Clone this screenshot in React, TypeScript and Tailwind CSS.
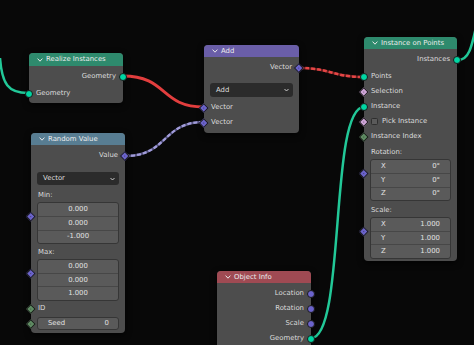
import React from "react";

type Kind = "circle" | "diamond";

function Socket({ side, kind, color, top }: { side: "left" | "right"; kind: Kind; color: string; top?: string }) {
  const pos = side === "left" ? "left-0 -translate-x-1/2" : "right-0 translate-x-1/2";
  const vert = top ? top : "top-1/2 -translate-y-1/2";
  if (kind === "circle") {
    return (
      <span
        className={`absolute ${vert} ${pos} w-[8px] h-[8px] rounded-full border border-[#1a1a1a] ${color}`}
      />
    );
  }
  return (
    <span className={`absolute ${vert} ${pos} w-[9px] h-[9px] flex items-center justify-center`}>
      <span className={`w-[6.5px] h-[6.5px] rotate-45 border border-[#1a1a1a] ${color} flex items-center justify-center`}>
        <span className="w-[1.5px] h-[1.5px] bg-[#222]/60" />
      </span>
    </span>
  );
}

function Chevron() {
  return (
    <svg width="6" height="4" viewBox="0 0 6 4" className="shrink-0">
      <polyline points="0.6,0.6 3,3.2 5.4,0.6" fill="none" stroke="#e8e8e8" strokeWidth="1" />
    </svg>
  );
}

function Node({
  pos,
  w,
  header,
  headerH,
  title,
  children,
}: {
  pos: string;
  w: string;
  header: string;
  headerH: string;
  title: string;
  children: React.ReactNode;
}) {
  return (
    <div className={`absolute ${pos} ${w} rounded-[4px] bg-[#4d4d4d] text-[#dcdcdc] shadow-[0_2px_6px_rgba(0,0,0,0.7)]`}>
      <div className={`${headerH} ${header} rounded-t-[4px] flex items-center gap-[3px] pl-[8px] text-[#ececec]`}>
        <Chevron />
        <span>{title}</span>
      </div>
      {children}
    </div>
  );
}

function Row({
  label,
  side,
  kind,
  color,
  cls = "",
}: {
  label: string;
  side: "left" | "right";
  kind: Kind;
  color: string;
  cls?: string;
}) {
  return (
    <div
      className={`relative h-[15px] flex items-center px-[7px] ${side === "right" ? "justify-end" : "justify-start"} ${cls}`}
    >
      <span>{label}</span>
      <Socket side={side} kind={kind} color={color} />
    </div>
  );
}

function Dropdown({ label, cls }: { label: string; cls: string }) {
  return (
    <div className={`px-[6px] ${cls}`}>
      <div className="h-full rounded-[3px] bg-[#2b2b2b] flex items-center justify-between pl-[6px] pr-[4px] text-[#dedede]">
        <span>{label}</span>
        <svg width="5" height="4" viewBox="0 0 5 4">
          <polyline points="0.5,1 2.5,3 4.5,1" fill="none" stroke="#dcdcdc" strokeWidth="0.9" />
        </svg>
      </div>
    </div>
  );
}

function FieldGroup({
  rows,
  sock,
  rowH,
}: {
  rows: { l?: string; v: string }[];
  sock: string;
  rowH: string;
}) {
  return (
    <div className="relative px-[6px]">
      <div className="rounded-[3px] border border-[#363636] bg-[#5a5a5a] flex flex-col overflow-hidden">
        {rows.map((r, i) => (
          <div
            key={i}
            className={`${rowH} flex items-center ${r.l ? "justify-between pl-[10px] pr-[10px]" : "justify-center"} ${
              i > 0 ? "border-t border-[#474747]" : ""
            } text-[#e2e2e2]`}
          >
            {r.l ? <span>{r.l}</span> : null}
            <span>{r.v}</span>
          </div>
        ))}
      </div>
      <Socket side="left" kind="diamond" color={sock} top="top-[9.5px]" />
    </div>
  );
}

const GEO = "bg-[#00d6a3]";
const VEC = "bg-[#6b63cc]";
const BOOL = "bg-[#cfa6d8]";
const INT = "bg-[#5f8c63]";

export default function App() {
  return (
    <div className="relative w-[474px] h-[345px] overflow-hidden bg-[#080808] font-['DejaVu_Sans','Liberation_Sans',sans-serif] text-[6.9px] leading-none">
      <svg className="absolute inset-0" width="474" height="345" viewBox="0 0 474 345">
        <path d="M 0 58 C 2 84, 8 93, 28 93" fill="none" stroke="#22c898" strokeWidth="2.5" />
        <path d="M 123 76 C 168 76, 160 107, 204 107" fill="none" stroke="#e23e3e" strokeWidth="2.8" />
        <path d="M 125 156 C 168 156, 162 122, 204 122" fill="none" stroke="#55537f" strokeWidth="2.3" />
        <path d="M 125 156 C 168 156, 162 122, 204 122" fill="none" stroke="#a29ddb" strokeWidth="2.3" strokeDasharray="4 2" />
        <path d="M 299 68 C 332 68, 331 77, 364 77" fill="none" stroke="#6e2020" strokeWidth="2.5" />
        <path d="M 299 68 C 332 68, 331 77, 364 77" fill="none" stroke="#e54646" strokeWidth="2.5" strokeDasharray="4 2" />
        <path d="M 458 60 C 470 60, 472 45, 478 18" fill="none" stroke="#22c898" strokeWidth="2.5" />
        <path d="M 311 338 C 346 338, 329 107, 364 107" fill="none" stroke="#22c898" strokeWidth="2.5" />
      </svg>

      <Node pos="left-[29px] top-[53px]" w="w-[94px]" header="bg-[#2e8a6d]" headerH="h-[13px]" title="Realize Instances">
        <div className="pt-[3px] pb-[2px]">
          <Row label="Geometry" side="right" kind="circle" color={GEO} />
          <Row label="Geometry" side="left" kind="circle" color={GEO} cls="mt-[2px]" />
        </div>
      </Node>

      <Node pos="left-[204px] top-[45px]" w="w-[95px]" header="bg-[#6a5ea8]" headerH="h-[12px]" title="Add">
        <div className="pt-[3px] pb-[3px]">
          <Row label="Vector" side="right" kind="diamond" color={VEC} />
          <Dropdown label="Add" cls="h-[14px] mt-[8px]" />
          <Row label="Vector" side="left" kind="diamond" color={VEC} cls="mt-[3px]" />
          <Row label="Vector" side="left" kind="diamond" color={VEC} />
        </div>
      </Node>

      <Node pos="left-[31px] top-[133px]" w="w-[94px]" header="bg-[#587d92]" headerH="h-[12px]" title="Random Value">
        <div className="pt-[3px] pb-[3px]">
          <Row label="Value" side="right" kind="diamond" color={VEC} />
          <Dropdown label="Vector" cls="h-[13px] mt-[9px]" />
          <div className="h-[13px] mt-[4px] flex items-center px-[7px]">Min:</div>
          <FieldGroup rows={[{ v: "0.000" }, { v: "0.000" }, { v: "-1.000" }]} sock={VEC} rowH="h-[13.3px]" />
          <div className="h-[13px] mt-[2px] flex items-center px-[7px]">Max:</div>
          <FieldGroup rows={[{ v: "0.000" }, { v: "0.000" }, { v: "1.000" }]} sock={VEC} rowH="h-[13.3px]" />
          <Row label="ID" side="left" kind="diamond" color={INT} />
          <div className="relative mt-[1px] px-[6px]">
            <div className="h-[13px] rounded-[3px] border border-[#363636] bg-[#5a5a5a] flex items-center justify-between pl-[10px] pr-[9px] text-[#e2e2e2]">
              <span>Seed</span>
              <span>0</span>
            </div>
            <Socket side="left" kind="diamond" color={INT} />
          </div>
        </div>
      </Node>

      <Node pos="left-[364px] top-[37px]" w="w-[93px]" header="bg-[#2e8a6d]" headerH="h-[12px]" title="Instance on Points">
        <div className="pt-[3px] pb-[2px]">
          <Row label="Instances" side="right" kind="circle" color={GEO} />
          <Row label="Points" side="left" kind="circle" color={GEO} cls="mt-[2px]" />
          <Row label="Selection" side="left" kind="diamond" color={BOOL} />
          <Row label="Instance" side="left" kind="circle" color={GEO} />
          <div className="relative h-[15px] flex items-center pl-[7px] gap-[4px]">
            <span className="w-[7px] h-[7px] rounded-[1.5px] bg-[#5a5a5a] border border-[#2e2e2e]" />
            <span>Pick Instance</span>
            <Socket side="left" kind="diamond" color={BOOL} />
          </div>
          <Row label="Instance Index" side="left" kind="diamond" color={INT} />
          <div className="h-[13px] mt-[2px] flex items-center px-[7px]">Rotation:</div>
          <FieldGroup
            rows={[
              { l: "X", v: "0°" },
              { l: "Y", v: "0°" },
              { l: "Z", v: "0°" },
            ]}
            sock={VEC}
            rowH="h-[13.3px]"
          />
          <div className="h-[13px] mt-[3px] flex items-center px-[7px]">Scale:</div>
          <FieldGroup
            rows={[
              { l: "X", v: "1.000" },
              { l: "Y", v: "1.000" },
              { l: "Z", v: "1.000" },
            ]}
            sock={VEC}
            rowH="h-[13.3px]"
          />
        </div>
      </Node>

      <Node pos="left-[217px] top-[271px]" w="w-[94px]" header="bg-[#9f4a53]" headerH="h-[12px]" title="Object Info">
        <div className="pt-[3px] pb-[6px]">
          <Row label="Location" side="right" kind="circle" color={VEC} />
          <Row label="Rotation" side="right" kind="circle" color={VEC} />
          <Row label="Scale" side="right" kind="circle" color={VEC} />
          <Row label="Geometry" side="right" kind="circle" color={GEO} />
        </div>
      </Node>
    </div>
  );
}
